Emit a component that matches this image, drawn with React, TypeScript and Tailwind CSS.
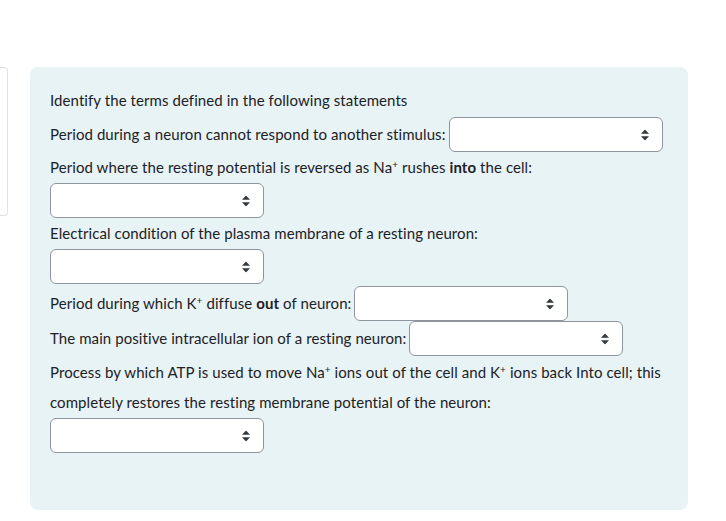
import React from "react";

function Select({ className = "" }: { className?: string }) {
  return (
    <div
      className={`relative h-[35px] w-[214px] shrink-0 rounded-md border border-[#8f959e] bg-white ${className}`}
    >
      <svg
        className="absolute right-[13px] top-1/2 -translate-y-1/2"
        width="8"
        height="11"
        viewBox="0 0 8 11"
      >
        <path d="M4 0 L8 4.2 H0 Z" fill="#343a40" />
        <path d="M4 11 L8 6.8 H0 Z" fill="#343a40" />
      </svg>
    </div>
  );
}

function Sup({ children }: { children: React.ReactNode }) {
  return <span className="relative -top-[5px] text-[10px]">{children}</span>;
}

export default function App() {
  return (
    <div
      className="flex min-h-screen items-start bg-white pt-[67px] text-[15px] tracking-[0.08px] text-[#1d2125]"
      style={{ fontFamily: "Lato, 'Liberation Sans', sans-serif" }}
    >
      {/* left card edge */}
      <div className="h-[149px] w-[8px] shrink-0 rounded-r-sm border border-l-0 border-[#dee2e6] bg-white" />

      {/* question panel */}
      <div className="ml-[22px] flex h-[443px] w-[658px] flex-col rounded-lg bg-[#e7f3f5] px-5 pt-[18px]">
        <div className="flex h-[30px] items-center">
          Identify the terms defined in the following statements
        </div>
        <div className="mt-[2px] flex h-[35px] items-center">
          <span>Period during a neuron cannot respond to another stimulus:</span>
          <Select className="ml-[3px]" />
        </div>
        <div className="flex h-[30px] items-center">
          <span>
            Period where the resting potential is reversed as Na<Sup>+</Sup> rushes{" "}
            <b className="font-bold">into</b> the cell:
          </span>
        </div>
        <div className="mt-[1px] flex">
          <Select />
        </div>
        <div className="flex h-[30px] items-center">
          Electrical condition of the plasma membrane of a resting neuron:
        </div>
        <div className="mt-[1px] flex">
          <Select />
        </div>
        <div className="mt-[2px] flex h-[35px] items-center">
          <span>
            Period during which K<Sup>+</Sup> diffuse <b className="font-bold">out</b> of neuron:
          </span>
          <Select className="ml-[3px]" />
        </div>
        <div className="flex h-[35px] items-center">
          <span>The main positive intracellular ion of a resting neuron:</span>
          <Select className="ml-[3px]" />
        </div>
        <div className="mt-[1px] flex h-[30px] items-center">
          <span>
            Process by which ATP is used to move Na<Sup>+</Sup> ions out of the cell and K<Sup>+</Sup> ions back
            Into cell; this
          </span>
        </div>
        <div className="flex h-[30px] items-center">
          completely restores the resting membrane potential of the neuron:
        </div>
        <div className="mt-[1px] flex">
          <Select />
        </div>
      </div>
    </div>
  );
}
